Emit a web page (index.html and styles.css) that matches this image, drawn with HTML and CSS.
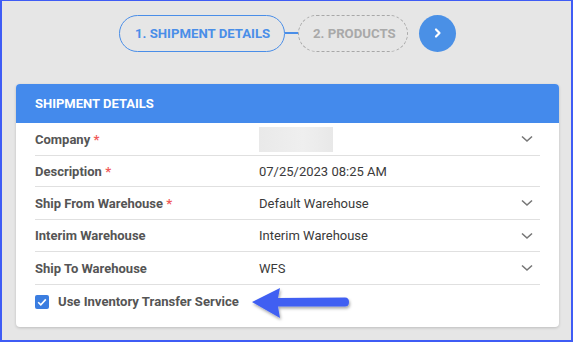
FILE: index.html
```html
<!DOCTYPE html>
<html>
    <head>
        <meta charset="UTF-8" />
        <title>Shipment Details</title>
        <link rel="stylesheet" href="styles.css">
    </head>
    <body>
        <div class="frame">
            <div class="stepper">
                <div class="step active">1. SHIPMENT DETAILS</div>
                <div class="step-link"></div>
                <div class="step pending">2. PRODUCTS</div>
                <div class="step-next">
                    <svg width="10" height="12" viewBox="0 0 10 12"><path d="M3 2.5 L6.5 6 L3 9.5" fill="none" stroke="#fff" stroke-width="2.2" stroke-linecap="round" stroke-linejoin="round"/></svg>
                </div>
            </div>

            <div class="card">
                <div class="card-head">SHIPMENT DETAILS</div>
                <div class="card-body">
                    <div class="row r-company">
                        <div class="label">Company <span class="req">*</span></div>
                        <div class="value"><div class="blank"></div></div>
                        <svg class="chev" width="12" height="8" viewBox="0 0 12 8"><path d="M1 1.5 L6 6 L11 1.5" fill="none" stroke="#777" stroke-width="1.6"/></svg>
                    </div>
                    <div class="row r-desc">
                        <div class="label">Description <span class="req">*</span></div>
                        <div class="value">07/25/2023 08:25 AM</div>
                    </div>
                    <div class="row r-from">
                        <div class="label">Ship From Warehouse <span class="req">*</span></div>
                        <div class="value">Default Warehouse</div>
                        <svg class="chev" width="12" height="8" viewBox="0 0 12 8"><path d="M1 1.5 L6 6 L11 1.5" fill="none" stroke="#777" stroke-width="1.6"/></svg>
                    </div>
                    <div class="row r-interim">
                        <div class="label">Interim Warehouse</div>
                        <div class="value">Interim Warehouse</div>
                        <svg class="chev" width="12" height="8" viewBox="0 0 12 8"><path d="M1 1.5 L6 6 L11 1.5" fill="none" stroke="#777" stroke-width="1.6"/></svg>
                    </div>
                    <div class="row r-to">
                        <div class="label">Ship To Warehouse</div>
                        <div class="value">WFS</div>
                        <svg class="chev" width="12" height="8" viewBox="0 0 12 8"><path d="M1 1.5 L6 6 L11 1.5" fill="none" stroke="#777" stroke-width="1.6"/></svg>
                    </div>
                    <div class="check-row">
                        <span class="checkbox">
                            <svg width="14" height="14" viewBox="0 0 14 14"><path d="M3.2 7.2 L5.8 9.8 L10.8 4.4" fill="none" stroke="#fff" stroke-width="1.6"/></svg>
                        </span>
                        <span class="check-label">Use Inventory Transfer Service</span>
                        <svg class="arrow" width="104" height="40" viewBox="0 0 104 40">
                            <defs>
                                <filter id="sh" x="-10%" y="-20%" width="130%" height="160%">
                                    <feDropShadow dx="1" dy="2" stdDeviation="1.5" flood-color="#000" flood-opacity="0.35"/>
                                </filter>
                            </defs>
                            <path filter="url(#sh)" d="M2 17 L30 3 L28 13 L95 12.5 Q99 12.5 99 17 Q99 21.5 95 21.5 L28 21.5 L30 33 Z" fill="#3f5ff2"/>
                        </svg>
                    </div>
                </div>
            </div>
        </div>
    </body>
</html>
```

FILE: styles.css
```css
* {
  margin: 0;
  padding: 0;
  box-sizing: border-box;
}

html, body {
  width: 100%;
  height: 100%;
}

body {
  font-family: Roboto, "Liberation Sans", Arial, sans-serif;
  background: #e7e7e7;
}

.frame {
  width: 573px;
  height: 342px;
  border: 2px solid #3f5cf5;
  border-top-width: 1px;
  background: #e6e6e6;
  padding: 13px 12px 0 14px;
}

/* stepper */

.stepper {
  display: flex;
  align-items: center;
  justify-content: center;
  height: 38px;
}

.step {
  height: 37px;
  border-radius: 19px;
  display: flex;
  align-items: center;
  font-size: 13.2px;
  font-weight: 700;
}

.step.active {
  width: 166px;
  padding-left: 15px;
  border: 1.5px solid #4a8ee8;
  color: #4a8ee8;
}

.step-link {
  width: 13px;
  height: 2px;
  background: #4a8ee8;
}

.step.pending {
  width: 110px;
  padding-left: 14px;
  border: 1.5px dashed #a8a8a8;
  color: #a9a9a9;
}

.step-next {
  width: 37px;
  height: 37px;
  border-radius: 50%;
  margin-left: 11px;
  background: #4a90e6;
  display: flex;
  align-items: center;
  justify-content: center;
}

/* card */

.card {
  margin-top: 32px;
  background: #fff;
  border-radius: 4px;
  box-shadow: 0 1px 3px rgba(0, 0, 0, 0.18);
  overflow: hidden;
}

.card-head {
  height: 39px;
  background: #448aec;
  color: #fff;
  font-size: 13px;
  font-weight: 700;
  padding-left: 19px;
  display: flex;
  align-items: center;
}

.card-body {
  padding: 0 19px 9px 19px;
}

.row {
  display: flex;
  align-items: center;
  height: 33px;
  border-bottom: 1px solid #e0e0e0;
}

.row.r-desc {
  height: 31px;
}

.row.r-interim {
  height: 32px;
}

.label {
  width: 224px;
  font-size: 13px;
  font-weight: 700;
  color: #555;
}

.req {
  color: #f05a5a;
}

.value {
  flex: 1;
  font-size: 13px;
  color: #3a3a3a;
}

.blank {
  width: 74px;
  height: 25px;
  background: linear-gradient(90deg, #e9e9e9, #efefef 60%, #e8e8e8);
}

.chev {
  margin-right: 7px;
}

.check-row {
  position: relative;
  display: flex;
  align-items: center;
  height: 33px;
}

.checkbox {
  width: 14px;
  height: 14px;
  border-radius: 2px;
  background: #3b7de0;
  display: flex;
  margin-right: 9px;
}

.check-label {
  font-size: 13.1px;
  font-weight: 700;
  color: #555;
}

.arrow {
  position: absolute;
  left: 215px;
  top: 0;
}
```
